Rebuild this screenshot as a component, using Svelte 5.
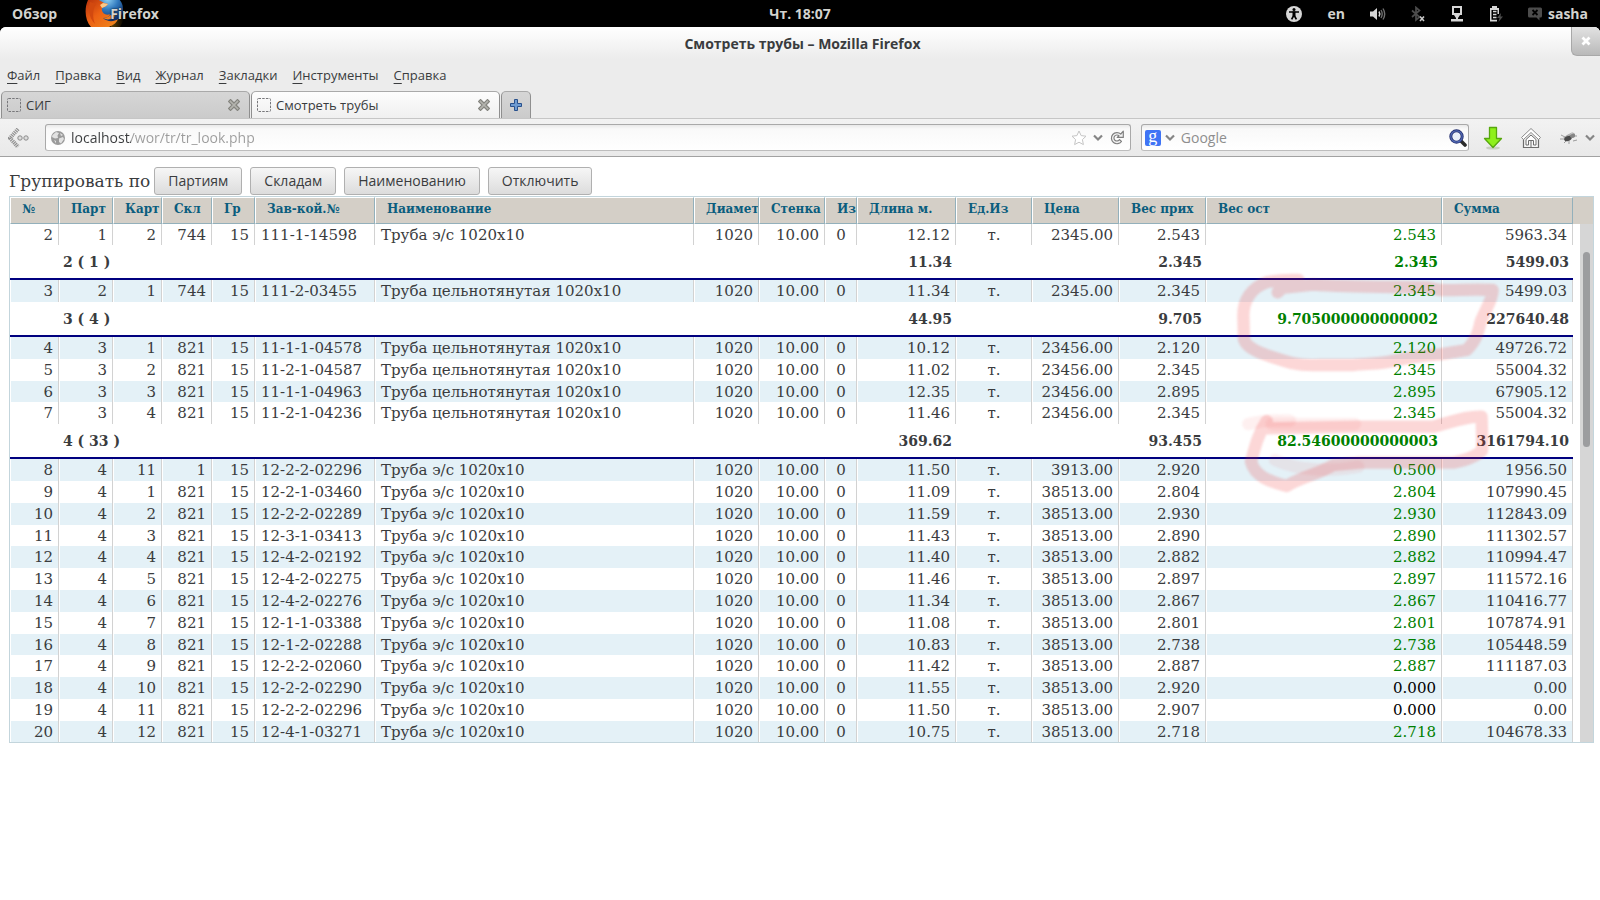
<script lang="ts">
  type Column = { title: string; width?: number; align: 'left' | 'right' | 'center' };
  type Item = { kind: 'item'; n: number; cells: string[] };
  type Group = { kind: 'group'; label: string; length: string; incoming: string; rest: string; sum: string };

  const menus = ['Файл', 'Правка', 'Вид', 'Журнал', 'Закладки', 'Инструменты', 'Справка'];
  const groupings = ['Партиям', 'Складам', 'Наименованию', 'Отключить'];

  const columns: Column[] = [
    { title: '№', width: 49, align: 'right' },
    { title: 'Парт', width: 54, align: 'right' },
    { title: 'Карт', width: 49, align: 'right' },
    { title: 'Скл', width: 50, align: 'right' },
    { title: 'Гр', width: 43, align: 'right' },
    { title: 'Зав-кой.№', width: 120, align: 'left' },
    { title: 'Наименование', width: 319, align: 'left' },
    { title: 'Диаметр', width: 65, align: 'right' },
    { title: 'Стенка', width: 66, align: 'right' },
    { title: 'Изм', width: 32, align: 'center' },
    { title: 'Длина м.', width: 99, align: 'right' },
    { title: 'Ед.Из', width: 76, align: 'center' },
    { title: 'Цена', width: 87, align: 'right' },
    { title: 'Вес прих', width: 87, align: 'right' },
    { title: 'Вес ост', align: 'right' },
    { title: 'Сумма', width: 131, align: 'right' }
  ];
  const REST = 14;

  const shortRows = [2, 6, 11, 16, 20];

  const welded = 'Труба э/с 1020x10';
  const seamless = 'Труба цельнотянутая 1020x10';

  function item(n: number, part: number, card: number, store: number, code: string, name: string,
                length: string, price: string, incoming: string, rest: string, sum: string): Item {
    return {
      kind: 'item',
      n,
      cells: [`${n}`, `${part}`, `${card}`, `${store}`, '15', code, name, '1020', '10.00', '0',
        length, 'т.', price, incoming, rest, sum]
    };
  }

  function group(label: string, length: string, incoming: string, rest: string, sum: string): Group {
    return { kind: 'group', label, length, incoming, rest, sum };
  }

  const rows: (Item | Group)[] = [
    item(2, 1, 2, 744, '111-1-14598', welded, '12.12', '2345.00', '2.543', '2.543', '5963.34'),
    group('2 ( 1 )', '11.34', '2.345', '2.345', '5499.03'),
    item(3, 2, 1, 744, '111-2-03455', seamless, '11.34', '2345.00', '2.345', '2.345', '5499.03'),
    group('3 ( 4 )', '44.95', '9.705', '9.705000000000002', '227640.48'),
    item(4, 3, 1, 821, '11-1-1-04578', seamless, '10.12', '23456.00', '2.120', '2.120', '49726.72'),
    item(5, 3, 2, 821, '11-2-1-04587', seamless, '11.02', '23456.00', '2.345', '2.345', '55004.32'),
    item(6, 3, 3, 821, '11-1-1-04963', seamless, '12.35', '23456.00', '2.895', '2.895', '67905.12'),
    item(7, 3, 4, 821, '11-2-1-04236', seamless, '11.46', '23456.00', '2.345', '2.345', '55004.32'),
    group('4 ( 33 )', '369.62', '93.455', '82.54600000000003', '3161794.10'),
    item(8, 4, 11, 1, '12-2-2-02296', welded, '11.50', '3913.00', '2.920', '0.500', '1956.50'),
    item(9, 4, 1, 821, '12-2-1-03460', welded, '11.09', '38513.00', '2.804', '2.804', '107990.45'),
    item(10, 4, 2, 821, '12-2-2-02289', welded, '11.59', '38513.00', '2.930', '2.930', '112843.09'),
    item(11, 4, 3, 821, '12-3-1-03413', welded, '11.43', '38513.00', '2.890', '2.890', '111302.57'),
    item(12, 4, 4, 821, '12-4-2-02192', welded, '11.40', '38513.00', '2.882', '2.882', '110994.47'),
    item(13, 4, 5, 821, '12-4-2-02275', welded, '11.46', '38513.00', '2.897', '2.897', '111572.16'),
    item(14, 4, 6, 821, '12-4-2-02276', welded, '11.34', '38513.00', '2.867', '2.867', '110416.77'),
    item(15, 4, 7, 821, '12-1-1-03388', welded, '11.08', '38513.00', '2.801', '2.801', '107874.91'),
    item(16, 4, 8, 821, '12-1-2-02288', welded, '10.83', '38513.00', '2.738', '2.738', '105448.59'),
    item(17, 4, 9, 821, '12-2-2-02060', welded, '11.42', '38513.00', '2.887', '2.887', '111187.03'),
    item(18, 4, 10, 821, '12-2-2-02290', welded, '11.55', '38513.00', '2.920', '0.000', '0.00'),
    item(19, 4, 11, 821, '12-2-2-02296', welded, '11.50', '38513.00', '2.907', '0.000', '0.00'),
    item(20, 4, 12, 821, '12-4-1-03271', welded, '10.75', '38513.00', '2.718', '2.718', '104678.33')
  ];

  const striped = new Set([3, 4, 6, 8, 10, 12, 14, 16, 18, 20]);

  let address = $state('localhost/wor/tr/tr_look.php');
  let query = $state('');
</script>

{#snippet cross()}
  <svg width="12" height="12" viewBox="0 0 12 12" aria-hidden="true">
    <path d="M2.5 2.5 L9.5 9.5 M9.5 2.5 L2.5 9.5" stroke="#85857f" stroke-width="4" stroke-linecap="square" />
    <path d="M2.5 2.5 L9.5 9.5 M9.5 2.5 L2.5 9.5" stroke="#b4b4ae" stroke-width="1.6" stroke-linecap="square" />
  </svg>
{/snippet}

{#snippet chevron()}
  <svg class="chevron" width="10" height="8" viewBox="0 0 10 8" aria-hidden="true">
    <path d="M1 1.5 L5 5.5 L9 1.5" fill="none" stroke="#858585" stroke-width="2.2" />
  </svg>
{/snippet}

<div class="desktop">
  <header class="panel">
    <div class="panel__left">
      <button class="panel__button">Обзор</button>
      <button class="panel__button panel__app">
        <svg width="42" height="27" viewBox="0 0 42 27" aria-hidden="true">
          <defs>
            <radialGradient id="globe" cx="0.45" cy="0.15" r="0.85">
              <stop offset="0" stop-color="#8fd0f2" />
              <stop offset="0.45" stop-color="#2f78bd" />
              <stop offset="1" stop-color="#0b2257" />
            </radialGradient>
            <linearGradient id="fox" x1="0" y1="0" x2="1" y2="1">
              <stop offset="0" stop-color="#b8330c" />
              <stop offset="0.45" stop-color="#ec6114" />
              <stop offset="1" stop-color="#f08a1e" />
            </linearGradient>
            <linearGradient id="tail" x1="0" y1="0" x2="1" y2="0">
              <stop offset="0" stop-color="#a8720c" stop-opacity="0.6" />
              <stop offset="1" stop-color="#a8720c" stop-opacity="0" />
            </linearGradient>
          </defs>
          <path d="M34 0 C40 8 41 18 35 27 H26 V0 Z" fill="url(#tail)" />
          <circle cx="24" cy="9" r="14" fill="url(#globe)" />
          <path d="M3 0 C-1 9 0 20 6 27 H24 C29 25 32 22 33 19 C29 22 22 22 18 18 C21 18 24 17 25 14 C21 16 16 13 17 8 C19 7 22 6 23 4 L19 3 C18 2 15 1 14 0 Z" fill="url(#fox)" />
          <path d="M5 2 C3 9 4 18 10 24 C7 17 8 8 11 4 Z" fill="#d2490f" />
          <path d="M17 8 C19 7 22 6 23 4 L18 3 L15 5 Z" fill="#f9c98a" />
          <path d="M18 18 C21 18 24 17 25 15 C28 16 30 15 31 14 C29 19 23 21 18 18 Z" fill="#ef7c1e" />
        </svg>
        <span>Firefox</span>
      </button>
    </div>
    <button class="panel__button">Чт. 18:07</button>
    <div class="panel__right">
      <svg width="16" height="16" viewBox="0 0 16 16" aria-hidden="true">
        <circle cx="8" cy="8" r="8" fill="#d6d6d6" />
        <circle cx="8" cy="3.6" r="1.5" fill="#000" />
        <path d="M3 6 H13 M8 6 V9.5 M8 9 L5.6 13.4 M8 9 L10.4 13.4" stroke="#000" stroke-width="1.7" fill="none" />
        <path d="M6.5 5.5 H9.5 V9.8 H6.5 Z" fill="#000" />
      </svg>
      <span>en</span>
      <svg width="16" height="14" viewBox="0 0 16 14" aria-hidden="true">
        <path d="M0 4.5 H3 L7 1 V13 L3 9.5 H0 Z" fill="#d6d6d6" />
        <path d="M9 4.5 Q10.6 7 9 9.5" stroke="#d6d6d6" stroke-width="1.5" fill="none" />
        <path d="M11 3 Q13.4 7 11 11 M13 1.5 Q16.4 7 13 12.5" stroke="#6e6e6e" stroke-width="1.4" fill="none" />
      </svg>
      <svg width="14" height="16" viewBox="0 0 14 16" aria-hidden="true">
        <path d="M1 4.5 L8.5 11 L5 14 V1.5 L8.5 4.5 L1 11" stroke="#4c4c4c" stroke-width="1.7" fill="none" />
        <path d="M9 10.5 L13 15 M13 10.5 L9 15" stroke="#c9c9c9" stroke-width="1.6" />
      </svg>
      <svg width="14" height="16" viewBox="0 0 14 16" aria-hidden="true">
        <path d="M2 0 H12 V9 H2 Z M4 2 V7 H10 V2 Z" fill="#d6d6d6" fill-rule="evenodd" />
        <path d="M4 9 H10 L8 12 V13 H13 V15.5 H1 V13 H6 V12 Z" fill="#d6d6d6" />
      </svg>
      <svg width="14" height="16" viewBox="0 0 14 16" aria-hidden="true">
        <path d="M3 0 H8 V2 H10 V8 H8.5 V4 H2.5 V13.7 H8 V15.5 H1 V2 H3 Z" fill="#d6d6d6" />
        <path d="M4 5.5 H7.5 M4 8.5 H7.5 M4 11.5 H7.5" stroke="#d6d6d6" stroke-width="1.6" />
        <path d="M12 7 L8 12 H10.5 L9.5 16 L14 10.5 H11.5 Z" fill="#4c4c4c" />
      </svg>
      <div class="panel__user">
        <svg width="14" height="14" viewBox="0 0 14 14" aria-hidden="true">
          <path d="M1.5 0.5 H12.5 Q14 0.5 14 2 V9 Q14 10.5 12.5 10.5 H11.5 V13.5 L8.5 10.5 H1.5 Q0 10.5 0 9 V2 Q0 0.5 1.5 0.5 Z" fill="#4c4c4c" />
          <path d="M4.5 3 L9.5 8 M9.5 3 L4.5 8" stroke="#000" stroke-width="1.8" />
        </svg>
        <span>sasha</span>
      </div>
    </div>
  </header>

  <div class="window">
    <div class="chrome">
      <div class="titlebar">
        <span>Смотреть трубы – Mozilla Firefox</span>
        <button class="titlebar__close" aria-label="Закрыть">
          <svg width="10" height="10" viewBox="0 0 10 10" aria-hidden="true">
            <path d="M1.5 1.5 L8.5 8.5 M8.5 1.5 L1.5 8.5" stroke="#fff" stroke-width="2.8" />
          </svg>
        </button>
      </div>

      <nav class="menubar">
        {#each menus as menu}
          <button class="menubar__item"><u>{menu[0]}</u>{menu.slice(1)}</button>
        {/each}
      </nav>

      <div class="tabs">
        {#each ['СИГ', 'Смотреть трубы'] as tab, i}
          <div class="tab" class:tab--active={i === 1}>
            <svg width="14" height="14" viewBox="0 0 14 14" aria-hidden="true">
              <rect x="0.5" y="0.5" width="13" height="13" rx="1" fill="none" stroke="#77777a" stroke-dasharray="2.5 1.2" />
            </svg>
            <span class="tab__title">{tab}</span>
            <button class="tab__close" aria-label="Закрыть вкладку">{@render cross()}</button>
          </div>
        {/each}
        <button class="tab tab--new" aria-label="Новая вкладка">
          <svg width="12" height="12" viewBox="0 0 12 12" aria-hidden="true">
            <path d="M4.5 0.5 H7.5 V4.5 H11.5 V7.5 H7.5 V11.5 H4.5 V7.5 H0.5 V4.5 H4.5 Z" fill="#6d9bd2" stroke="#28508c" />
          </svg>
        </button>
      </div>

      <div class="toolbar">
        <button class="toolbar__button toolbar__button--back" aria-label="Назад">
          <svg width="22" height="20" viewBox="0 0 22 20" aria-hidden="true">
            <path d="M10 1 L2 10 L10 19" fill="none" stroke="#909090" stroke-width="4" stroke-dasharray="1.2 0.8" />
            <circle cx="12" cy="10" r="2.2" fill="#ddd" stroke="#8c8c8c" />
            <circle cx="18" cy="10" r="2.2" fill="#ddd" stroke="#8c8c8c" />
          </svg>
        </button>

        <div class="field field--url">
          <svg width="14" height="14" viewBox="0 0 14 14" aria-hidden="true">
            <circle cx="7" cy="7" r="7" fill="#9b9b9b" />
            <path d="M1.5 4 L5 1 L8 2 L6.5 4.5 L7 7 L4 7.5 L1 6 Z M8 7.5 L12 6 L13 8 L10 12.5 L8 11 Z M9 2 L12 4 L10 5 Z M3 9 L5 10 L5 12.5 Z" fill="#e2e2e2" />
          </svg>
          <input class="field__input field__input--url" type="text" aria-label="Адрес" bind:value={address} />
          <svg width="16" height="16" viewBox="0 0 16 16" aria-hidden="true">
            <path d="M8 1 L10.1 5.6 L15 6.2 L11.4 9.6 L12.4 14.6 L8 12.2 L3.6 14.6 L4.6 9.6 L1 6.2 L5.9 5.6 Z" fill="#fff" stroke="#c4c4c4" />
          </svg>
          {@render chevron()}
          <svg width="16" height="16" viewBox="0 0 16 16" aria-hidden="true">
            <path d="M12.5 11.5 A5.6 5.6 0 1 1 11.8 4 L14.3 1.2 V7.4 H8.2 L10 5.8 A3 3 0 1 0 10.5 9.6 Z" fill="#f4f4f4" stroke="#808080" stroke-width="1.2" stroke-linejoin="round" />
          </svg>
        </div>

        <div class="field field--search">
          <span class="engine">g</span>
          {@render chevron()}
          <input class="field__input" type="text" aria-label="Поиск" placeholder="Google" bind:value={query} />
          <svg width="18" height="18" viewBox="0 0 18 18" aria-hidden="true">
            <path d="M11.5 11.5 L16 16" stroke="#2c2c2c" stroke-width="3.6" stroke-linecap="round" />
            <circle cx="7.5" cy="7.5" r="5.7" fill="#e9eef8" stroke="#25306e" stroke-width="3" />
            <circle cx="7.5" cy="7.5" r="5.7" fill="none" stroke="#5169b5" stroke-width="1.2" />
          </svg>
        </div>

        <button class="toolbar__button" aria-label="Загрузки">
          <svg width="20" height="24" viewBox="0 0 20 24" aria-hidden="true">
            <ellipse cx="10" cy="22" rx="7" ry="1.6" fill="#c9cfc2" />
            <path d="M6.5 1.5 H13.5 V12.5 H18.5 L10 21.5 L1.5 12.5 H6.5 Z" fill="#8ff01c" stroke="#57a80d" stroke-width="1.3" stroke-linejoin="round" />
          </svg>
        </button>
        <button class="toolbar__button" aria-label="Домашняя страница">
          <svg width="22" height="22" viewBox="0 0 22 22" aria-hidden="true">
            <path d="M3.5 11 V20.5 H18.5 V11" fill="#f6f6f6" stroke="#6c6c6c" stroke-width="1.2" />
            <path d="M11 1.5 L1.5 10.5 L3.5 12.5 L11 5.5 L18.5 12.5 L20.5 10.5 Z" fill="#fff" stroke="#8a8a8a" />
            <path d="M6 18 V12.5 L11 8 L16 12.5 V18 H13.5 V13.5 H8.5 V18 Z" fill="#fff" stroke="#6c6c6c" />
            <path d="M11 14 V20" stroke="#6c6c6c" />
          </svg>
        </button>
        <button class="toolbar__button" aria-label="Firebug">
          <svg width="18" height="14" viewBox="0 0 18 14" aria-hidden="true">
            <path d="M1 4 L5 6 M0 8 L6 8 M4 12 L7 9 M9 13 L9 9 M13 10 L17 9 M12 5 L17 5" stroke="#9b9b9b" stroke-width="1" />
            <path d="M3 7 L7 4 L11 2 L9 7 Z" fill="#a4a4a4" />
            <ellipse cx="8" cy="7.5" rx="4" ry="2.4" transform="rotate(-22 8 7.5)" fill="#4a4a4a" />
            <ellipse cx="12.5" cy="4.5" rx="2.6" ry="2.4" fill="#858585" />
            <path d="M8 5 L12 1 L14 2 Z" fill="#c2c2c2" />
          </svg>
        </button>
        <button class="toolbar__button toolbar__button--more" aria-label="Меню Firebug">{@render chevron()}</button>
      </div>
    </div>

    <main class="page">
      <div class="grouping">
        <span class="grouping__label">Групировать по</span>
        {#each groupings as grouping}
          <button class="grouping__button">{grouping}</button>
        {/each}
      </div>

      <div class="grid">
        <table class="grid__table">
          <colgroup>
            {#each columns as column}
              <col style={column.width ? `width: ${column.width}px` : undefined} />
            {/each}
          </colgroup>
          <thead>
            <tr>
              {#each columns as column}
                <th scope="col">{column.title}</th>
              {/each}
            </tr>
          </thead>
          <tbody>
            {#each rows as row}
              {#if row.kind === 'group'}
                <tr class="group">
                  <td></td>
                  <td class="group__label" colspan="9">{row.label}</td>
                  <td>{row.length}</td>
                  <td colspan="2"></td>
                  <td>{row.incoming}</td>
                  <td class="rest">{row.rest}</td>
                  <td>{row.sum}</td>
                </tr>
              {:else}
                <tr class="item" class:item--striped={striped.has(row.n)} class:item--short={shortRows.includes(row.n)}>
                  {#each row.cells as cell, i}
                    <td
                      class="cell--{columns[i].align}"
                      class:rest={i === REST}
                      class:rest--zero={i === REST && Number(cell) === 0}
                    >{cell}</td>
                  {/each}
                </tr>
              {/if}
            {/each}
          </tbody>
        </table>

        <div class="grid__side" aria-hidden="true">
          <div class="grid__cap"></div>
          <div class="grid__track">
            <div class="grid__thumb"></div>
          </div>
        </div>

        <svg class="marks" width="400" height="240" viewBox="0 0 1200 720" aria-hidden="true">
          <g fill="none" stroke="#f02828" stroke-width="37" stroke-linecap="round" stroke-linejoin="round">
            <path opacity="0.19" d="M293 97 C320 70 340 62 355 60 C320 58 285 62 262 66 C215 82 190 120 190 165 L192 238 C202 270 260 286 310 302 C350 316 380 316 420 315 H520 C570 310 610 312 650 300 C700 290 740 285 780 283 L860 270 C890 240 895 215 902 185 C915 150 938 120 938 90 C880 86 830 92 780 90 L740 82 C620 80 500 82 400 74 L300 84" />
            <path opacity="0.19" d="M260 483 C235 520 225 560 213 605 C225 650 270 665 320 678 C365 650 410 645 460 615 L540 608 H820 C860 600 890 588 906 572 C908 540 905 500 905 470 C860 468 820 485 760 500 H540 L262 505" />
            <path opacity="0.07" d="M205 492 C260 478 300 482 330 482" />
            <path opacity="0.07" d="M275 492 H525" />
            <path opacity="0.07" d="M285 600 C340 625 430 640 535 620" />
          </g>
        </svg>
      </div>
    </main>
  </div>
</div>

<style>
  :global(body) {
    background: #fff;
  }

  .desktop {
    --sans: 'Open Sans', 'Noto Sans', sans-serif;
    --serif: 'DejaVu Serif', serif;
    --ink: #3a3c3e;
    font-family: var(--sans);
    font-size: 14px;
    line-height: 20px;
    color: var(--ink);
    background: #000;
  }

  button {
    margin: 0;
    padding: 0;
    border: 0;
    background: none;
    color: inherit;
    font: inherit;
  }

  svg {
    display: block;
    flex: none;
  }

  .panel {
    display: grid;
    grid-template-columns: 1fr auto 1fr;
    align-items: center;
    height: 27px;
    padding: 0 12px;
    background: #000;
    color: #d3d3cf;
    font-weight: 700;
  }

  .panel__left,
  .panel__right,
  .panel__user {
    display: flex;
    align-items: center;
  }

  .panel__left {
    gap: 28px;
  }

  .panel__right {
    justify-content: flex-end;
    gap: 25px;
  }

  .panel__user {
    gap: 6px;
  }

  .panel__app {
    display: flex;
    align-items: center;
  }

  .panel__app span {
    margin-left: -17px;
    text-shadow: 0 0 2px #000;
  }

  .window {
    overflow: hidden;
    border-radius: 6px 6px 0 0;
    background: #fff;
  }

  .chrome {
    background: linear-gradient(#fff, #ececec 32px);
    border-bottom: 1px solid #a2a2a2;
  }

  .titlebar {
    position: relative;
    display: flex;
    justify-content: center;
    padding: 7px 0 7px 5px;
    font-weight: 700;
  }

  .titlebar__close {
    position: absolute;
    top: 0;
    right: 0;
    width: 29px;
    height: 29px;
    display: flex;
    align-items: center;
    justify-content: center;
    border-left: 1px solid #a8a8a8;
    border-bottom: 1px solid #a8a8a8;
    border-radius: 0 0 0 6px;
    background: linear-gradient(#e2e2e2, #b9b9b9);
  }

  .menubar {
    display: flex;
    gap: 15px;
    padding: 4px 7px 6px;
    font-size: 13px;
  }

  .menubar__item u {
    text-underline-offset: 3px;
  }

  .tabs {
    display: flex;
    gap: 1px;
    padding: 0 1px;
    border-bottom: 1px solid #c6c6c6;
  }

  .tab {
    display: flex;
    align-items: center;
    gap: 5px;
    box-sizing: border-box;
    width: 249px;
    height: 27px;
    padding: 0 9px 0 5px;
    border: 1px solid #8f8f8f;
    border-top-color: #a9a9a9;
    border-bottom: 0;
    border-radius: 5px 5px 0 0;
    background: linear-gradient(#d6d6d6, #cbcbcb);
  }

  .tab--active {
    margin-bottom: -1px;
    background: linear-gradient(#fdfdfd, #f0f0f0);
  }

  .tab--new {
    justify-content: center;
    width: 30px;
    padding: 0;
  }

  .tab__title {
    flex: 1;
    font-size: 13px;
  }

  .toolbar {
    display: flex;
    align-items: center;
    gap: 10px;
    padding: 5px 5px 5px 8px;
    background: linear-gradient(#f2f2f2, #e9e9e9);
  }

  .toolbar__button {
    display: flex;
    align-items: center;
    justify-content: center;
    min-width: 28px;
    height: 24px;
  }

  .toolbar__button--back {
    min-width: 27px;
    justify-content: flex-start;
  }

  .toolbar__button--more {
    min-width: 10px;
    margin-left: -8px;
  }

  .field {
    display: flex;
    align-items: center;
    gap: 6px;
    box-sizing: border-box;
    height: 27px;
    padding: 0 5px;
    border: 1px solid #a9a9a9;
    border-bottom-color: #bdbdbd;
    border-radius: 3px;
    background: linear-gradient(#e9e9e9, #f9f9f9 4px, #fff);
  }

  .field--url {
    flex: 10;
  }

  .field--search {
    flex: 3;
    gap: 4px;
    padding: 0 1px 0 3px;
  }

  .field__input {
    flex: 1;
    min-width: 0;
    margin: 0;
    padding: 0;
    border: 0;
    outline: 0;
    background: none;
    color: var(--ink);
    font: inherit;
    line-height: 20px;
  }

  .field--search .field__input {
    padding-left: 2px;
  }

  /* host part dark, path part grey */
  .field__input--url {
    background: linear-gradient(90deg, #3a3c3e 60px, #9c9c9c 60px);
    background-clip: text;
    -webkit-text-fill-color: transparent;
  }

  .field__input::placeholder {
    color: #8e8e8e;
    opacity: 1;
  }

  .engine {
    width: 16px;
    height: 16px;
    border-radius: 2px;
    background: #3f74f5;
    color: #fff;
    font-family: 'Liberation Serif', serif;
    font-size: 18px;
    line-height: 12px;
    text-align: center;
  }

  .page {
    padding: 10px 6px 156px 9px;
  }

  .grouping {
    display: flex;
    align-items: center;
    gap: 8px;
    margin-bottom: 1px;
  }

  .grouping__label {
    margin-right: -4px;
    font-family: var(--serif);
    font-size: 17px;
  }

  .grouping__button {
    height: 28px;
    padding: 0 13px;
    border: 1px solid #b0b0b0;
    border-radius: 3px;
    background: linear-gradient(#f6f6f6, #dcdcdc);
  }

  .grid {
    position: relative;
    display: flex;
    border: 1px solid #c3d5dc;
    font-family: var(--serif);
    font-size: 15px;
  }

  .grid__table {
    flex: 1;
    width: 100%;
    min-width: 0;
    table-layout: fixed;
    border-collapse: separate;
    border-spacing: 0;
  }

  th,
  td {
    box-sizing: border-box;
    overflow: hidden;
    padding: 0 5px;
    white-space: nowrap;
  }

  th {
    height: 27px;
    padding: 0 0 3px 11px;
    border: 1px solid #fff;
    border-right-color: #93b0bb;
    border-bottom-color: #93b0bb;
    background: #d4cfc7;
    color: #0a5d7e;
    font-size: 12px;
    font-weight: 700;
    text-align: left;
    line-height: 18px;
  }

  .item td {
    height: 22px;
    border-left: 1px solid #fff;
    border-right: 1px solid #d2d2d2;
    line-height: 20px;
  }

  .item--short td {
    height: 21px;
  }

  .item--striped td {
    background: #e4f1f7;
  }

  .cell--right {
    text-align: right;
  }

  .cell--center {
    text-align: center;
  }

  .item .rest,
  .group .rest {
    color: #008000;
  }

  .item .rest--zero {
    color: #000;
  }

  .group td {
    height: 35px;
    padding: 0 4px;
    border-bottom: 2px solid #00007f;
    font-size: 14px;
    font-weight: 700;
    text-align: right;
  }

  .group .group__label {
    text-align: left;
  }

  .grid__side {
    display: flex;
    flex-direction: column;
    width: 20px;
  }

  .grid__cap {
    height: 27px;
    background: #d4cfc7;
  }

  .grid__track {
    flex: 1;
    margin-left: 7px;
    padding: 28px 3px 0;
    background: #d6d6d6;
  }

  .grid__thumb {
    height: 195px;
    border-radius: 4px;
    background: #9c9d9f;
  }

  .marks {
    position: absolute;
    top: 63px;
    right: 13px;
    filter: blur(1px);
    pointer-events: none;
  }
</style>
